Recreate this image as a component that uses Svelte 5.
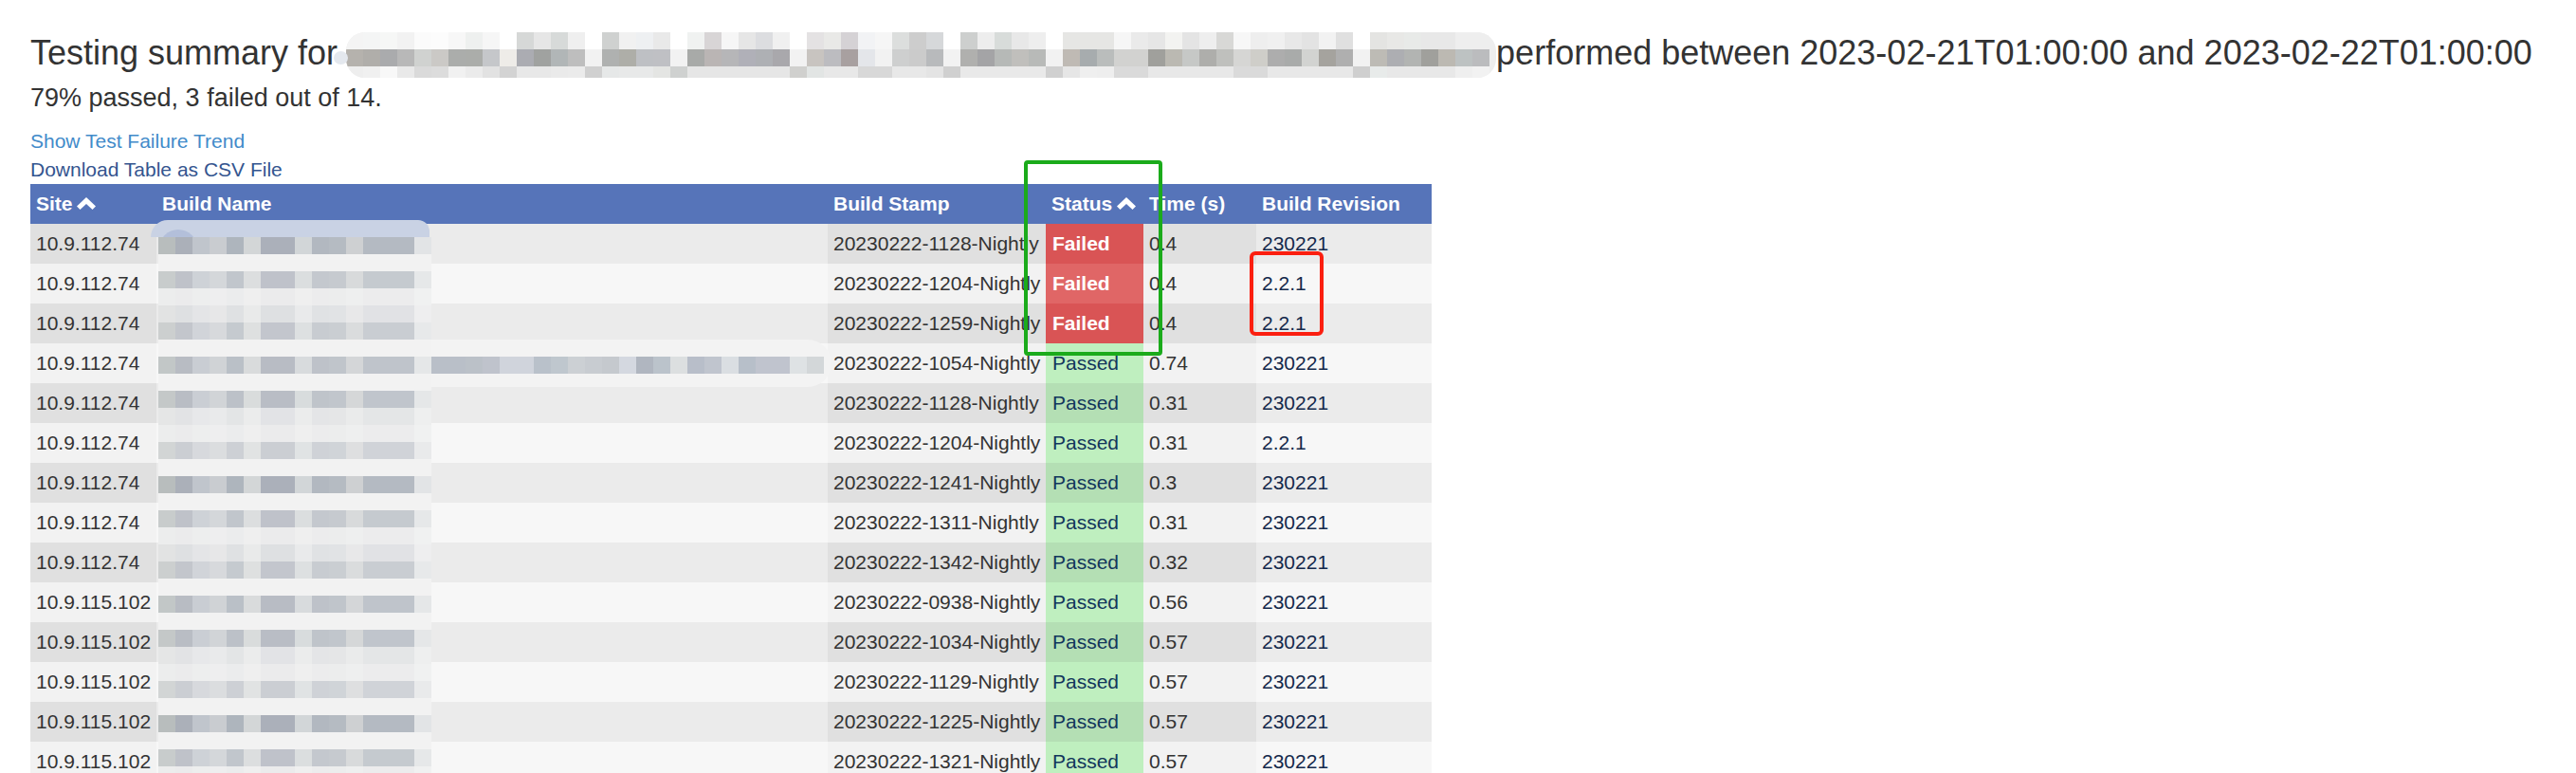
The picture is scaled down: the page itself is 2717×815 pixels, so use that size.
<script>
  // test summary page: table with a sorted Status column, pixelated (redacted) names
  const split = (s) => s.trim().split(/\s+/).map((c) => "#" + c);

  const titleMosaic = [
    split(`f4f4f4 f4f5f5 f6f7f6 f2f2f2 fbfbfb fcfcfc f7f7f7 eef0ef f6f6f6 ffffff d6d8d7 e6e6e6 d7dad9 efefef ffffff cfd1d0 f1f1f1 eef0f2 e9e9e9 ffffff f0f2f1 d8d5d6 f6f6f6 e6e6e6 dcdde0 f0f0f0 ffffff e4e2e3 e9e9e7 d5d2d5 f2f3f5 f6f6f6 dcdedd cdcdcd d6d8da
      ffffff cdcfce ededed d8dcda e8e8e8 eeeeee ffffff e6e6e4 e6e6e4 e6e6e4 f6f6f6 eaeaea e6e6e6 f3f3f1 e4e4e4 eeeeee d8d8d6 f7f7f7 eeeeee f0f0f0 e8e8e8 e3e3e3 f2f2f2 e0e0e0 ffffff e4e4e2 e8e8e6 e8eae8 e8e8e8 e8e8e8 eeeeee eeeeee`),
    split(`b5b2ad b0aeaa aaabad b8b8b8 d0d2d0 cbc9c6 abadab abadaa c5c7ca eeece8 abacb2 a0a2a0 b1b6b7 bebebe f2f2f2 afb1b0 aeaea8 bec0c4 bfc0c4 f2f2f2 a8aaa8 bab5b4 b6b6b8 b0b0b8 aeb0b4 a9a8ac f2f2f2 c8c4c0 bcbcc0 a8a0a0 e4e6ea f2f2f2 cecfcf cbcbcb b8babc
      f2f2f2 b0b0ae a4a4a6 b6b9b7 c0bfbc b8bab8 f2f2f2 bfbab4 a7acae babdbc d2d2d0 d2d2d0 a0a09c bbb9b2 c6c8c6 aeaeab bfc0bd d6d6d4 cfcec9 adadad a9abaa d2d3d1 a5a39e afafaf f2f2f2 bdbbb5 adaeb2 b2b4b2 a0a09c bcb9b2 bdc2c2 bbbcbe`),
    split(`eeeeee f0f0f0 f8f8f8 e9e9e9 dadada dcdcdc f1f1f1 ebebeb e2e2e2 d3d3d3 e8e8e8 e8e8e8 eaeaea ebebeb d0d0d0 e6e8e8 e8e9e9 e8e9e9 e4e5e3 cfd1d0 e6e6e6 e6e6e6 e6e6e6 e6e6e6 e6e6e6 e6e6e6 d0d0ce e2e5e4 e8e8e8 e8e8e8 d8d8d8 d8d8d8 e8e8e8 e8e8e8 e4e4e4
      d0d0d0 e9e9e9 e9e9e9 e9e9e9 e9e9e9 e9e9e9 d0d0d0 e6e6e6 efefef eeeeee dadada dadada e8e8e8 e8e8e8 e8e8e8 e8e8e8 e8e8e8 dadada dadada e8e8e8 e8e8e8 e8e8e8 e8e8e8 e8e8e8 cfcfcf e8ebea e8e8e8 e8e8e8 e8e8e8 e8e8e8 efefef f2f2f2`),
  ];

  // darkest row of the name mosaic; the other rows fade towards the row tint
  const ink = split(`b8bdbd abb0b9 c0c5cc c9ccd0 aeb5bd d3d6d7 abb0ba abb0ba d2d6d8 b2b8c0 b5bbc2 ced0d2 b4bac2 b4bac2 b4bac2 e2e4e6`);
  const fade = [1, 0, 0.72, 0.1, 0.28, 0.66, 0, 0.82, 0, 0.8, 0.22, 0.1, 0.55, 0];

  const hex = (h, i) => parseInt(h.slice(i, i + 2), 16);
  function mix(c, k) {
    const ch = (i) => Math.round(242 + (hex(c, i) - 242) * k);
    return `rgb(${ch(1)},${ch(3)},${ch(5)})`;
  }
  const nameCells = [];
  for (let r = 0; r < 32; r++) {
    for (const c of ink) nameCells.push(mix(c, fade[r % 14]));
  }

  const longName = split(`b9bfc8 b9bfc8 bbc1c8 bfc3cc d0d4dc d0d4dc b9c1ca bfc7ce ccd0d4 c8ccd1 c5c9ce d4d8e0 b0b6c0 bbc3cb dcdfe0 b8bec9 c0c5ce dadee2 b7bfc9 c0c4ce c0c4ce dee2e4 d3d7d9`);

  const a = "10.9.112.74";
  const b = "10.9.115.102";
  const rows = [
    [a, "1128", "Failed", "0.4", "230221"],
    [a, "1204", "Failed", "0.4", "2.2.1"],
    [a, "1259", "Failed", "0.4", "2.2.1"],
    [a, "1054", "Passed", "0.74", "230221"],
    [a, "1128", "Passed", "0.31", "230221"],
    [a, "1204", "Passed", "0.31", "2.2.1"],
    [a, "1241", "Passed", "0.3", "230221"],
    [a, "1311", "Passed", "0.31", "230221"],
    [a, "1342", "Passed", "0.32", "230221"],
    [b, "0938", "Passed", "0.56", "230221"],
    [b, "1034", "Passed", "0.57", "230221"],
    [b, "1129", "Passed", "0.57", "230221"],
    [b, "1225", "Passed", "0.57", "230221"],
    [b, "1321", "Passed", "0.57", "230221"],
  ];
</script>

{#snippet chevron()}
  <svg class="chevron" viewBox="0 0 20 13" width="20" height="13" aria-hidden="true">
    <path d="M0 9.5 10 0 20 9.5 16.5 13 10 7 3.5 13Z" fill="#fff" />
  </svg>
{/snippet}

<div class="page">
  <h3 class="title">
    <span>Testing summary for</span>
    <span class="title-mosaic">
      {#each titleMosaic as line}
        {#each line as c}<i style="background:{c}"></i>{/each}
      {/each}
    </span>
    <span>performed between 2023-02-21T01:00:00 and 2023-02-22T01:00:00</span>
  </h3>
  <p class="lead">79% passed, 3 failed out of 14.</p>
  <div class="links">
    <a href="#trend" class="trend">Show Test Failure Trend</a>
    <a href="#csv" class="csv">Download Table as CSV File</a>
  </div>

  <table>
    <colgroup>
      <col style="width:133px" /><col style="width:708px" /><col style="width:230px" />
      <col style="width:103px" /><col style="width:119px" /><col style="width:185px" />
    </colgroup>
    <thead>
      <tr>
        <th>Site {@render chevron()}</th>
        <th>Build Name</th>
        <th>Build Stamp</th>
        <th>Status {@render chevron()}</th>
        <th>Time (s)</th>
        <th>Build Revision</th>
      </tr>
    </thead>
    <tbody>
      {#each rows as r}
        <tr>
          <td class="shade">{r[0]}</td>
          <td></td>
          <td class="shade">20230222-{r[1]}-Nightly</td>
          <td class={r[2].toLowerCase()}>{r[2]}</td>
          <td class="shade">{r[3]}</td>
          <td class="rev">{r[4]}</td>
        </tr>
      {/each}
    </tbody>
  </table>

  <!-- redaction painted over the title and the Build Name column -->
  <div class="title-dot"></div>
  <div class="smear"><b></b></div>
  <div class="name-mosaic">
    {#each nameCells as c}<i style="background:{c}"></i>{/each}
  </div>
  <div class="long-name">
    {#each longName as c}<i style="background:{c}"></i>{/each}
  </div>

  <!-- hand-drawn annotations -->
  <div class="mark green"></div>
  <div class="mark red"></div>
</div>

<style>
  :global(body) {
    margin: 0;
    background: #fff;
  }
  .page {
    position: relative;
    height: 815px;
    overflow: hidden;
    padding: 36px 0 0 32px;
    box-sizing: border-box;
    font-family: "Liberation Sans", Arial, sans-serif;
    color: #333;
  }
  .title {
    display: flex;
    height: 40px;
    margin: 0;
    font-size: 36px;
    font-weight: 400;
    line-height: 40px;
    white-space: nowrap;
  }
  .title-mosaic {
    display: grid;
    flex: none;
    grid-template-columns: repeat(67, 18px);
    grid-template-rows: 18px 18px 12px;
    width: 1206px;
    height: 48px;
    margin: -2px 0 0 9px;
    padding-right: 7px;
    background: #eee;
    border-radius: 20px;
    overflow: hidden;
  }
  .title-dot {
    position: absolute;
    left: 352px;
    top: 54px;
    width: 15px;
    height: 14px;
    border-radius: 50%;
    background: #e4e8ee;
  }
  i {
    display: block;
  }
  .lead {
    margin: 8px 0 0;
    font-size: 27px;
    line-height: 38px;
  }
  .links {
    display: flex;
    flex-direction: column;
    align-items: flex-start;
    margin-top: 12px;
    font-size: 21px;
    line-height: 30px;
  }
  a {
    text-decoration: none;
  }
  .trend {
    color: #428bca;
  }
  .csv {
    color: #34558f;
  }

  table {
    width: 1478px;
    table-layout: fixed;
    border-collapse: collapse;
    font-size: 21px;
  }
  th,
  td {
    height: 42px;
    padding: 0 6px;
    text-align: left;
    white-space: nowrap;
    box-sizing: border-box;
  }
  th {
    background: #5674b9;
    color: #fff;
    font-weight: 700;
  }
  .chevron {
    margin-left: -1px;
    vertical-align: 1px;
  }
  tbody tr:nth-child(odd) td {
    background: #ebebeb;
  }
  tbody tr:nth-child(even) td {
    background: #f7f7f7;
  }
  tbody tr:nth-child(odd) td.shade {
    background: #e0e0e0;
  }
  tbody tr:nth-child(even) td.shade {
    background: #f2f2f2;
  }
  tbody tr td.failed {
    background: #d95455;
    color: #fff;
    font-weight: 700;
    padding-left: 7px;
  }
  tbody tr:nth-child(even) td.failed {
    background: #e06666;
  }
  tbody tr td.passed {
    background: #b4dfb4;
    color: #12365c;
    padding-left: 7px;
  }
  tbody tr:nth-child(even) td.passed {
    background: #bfefbf;
  }
  .rev {
    color: #14294b;
  }

  .smear {
    position: absolute;
    left: 159px;
    top: 232px;
    width: 294px;
    height: 18px;
    overflow: hidden;
    background: #c9d2e4;
    border-radius: 24px 16px 0 0;
  }
  .smear b {
    position: absolute;
    left: 9px;
    top: 10px;
    width: 40px;
    height: 40px;
    border-radius: 50%;
    background: #b3bfda;
  }
  .name-mosaic {
    position: absolute;
    left: 167px;
    top: 250px;
    display: grid;
    grid-template-columns: repeat(16, 18px);
    grid-auto-rows: 18px;
  }
  .long-name {
    position: absolute;
    left: 455px;
    top: 358px;
    display: grid;
    grid-template-columns: repeat(23, 18px);
    grid-template-rows: 18px;
    width: 422px;
    height: 50px;
    padding-top: 18px;
    box-sizing: border-box;
    background: #f3f3f3;
    border-radius: 0 26px 26px 0;
    overflow: hidden;
  }
  .mark {
    position: absolute;
    box-sizing: border-box;
    border-style: solid;
    border-width: 4px;
    border-radius: 4px;
  }
  .green {
    left: 1080px;
    top: 169px;
    width: 146px;
    height: 206px;
    border-color: #1bab1b;
  }
  .red {
    left: 1318px;
    top: 265px;
    width: 78px;
    height: 89px;
    border-color: #fb1f10;
    border-radius: 6px;
  }
</style>
